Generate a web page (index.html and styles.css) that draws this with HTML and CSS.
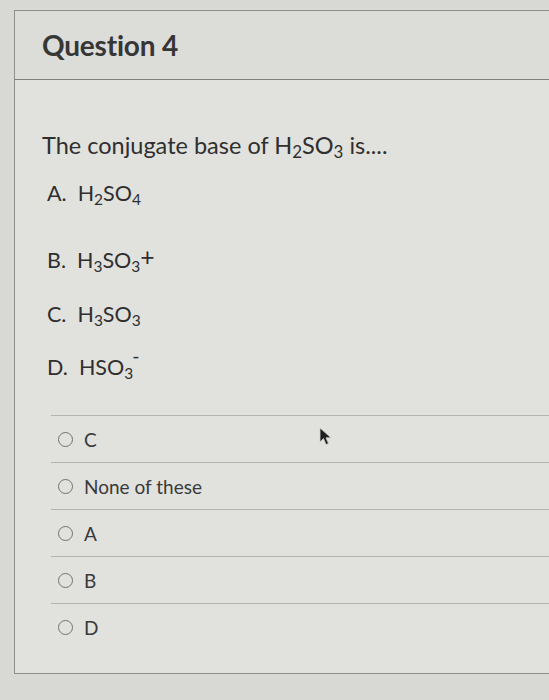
FILE: index.html
```html
<!DOCTYPE html>
<html>
<head>
<meta charset="utf-8">
<link rel="stylesheet" href="styles.css">
</head>
<body>
<div class="page">
  <div class="card">
    <div class="header">
      <h2 class="title">Question 4</h2>
    </div>
    <div class="content">
      <p class="prompt">The conjugate base of H<sub>2</sub>SO<sub>3</sub> is....</p>
      <p class="opt opt-a">A.&nbsp; H<sub>2</sub>SO<sub>4</sub></p>
      <p class="opt opt-b">B.&nbsp; H<sub>3</sub>SO<sub>3</sub><span class="plus">+</span></p>
      <p class="opt opt-c">C.&nbsp; H<sub>3</sub>SO<sub>3</sub></p>
      <p class="opt opt-d">D.&nbsp; HSO<sub>3</sub><span class="minus">-</span></p>
      <div class="answers">
        <label class="answer"><span class="radio"></span><span class="atext">C</span></label>
        <label class="answer"><span class="radio"></span><span class="atext">None of these</span></label>
        <label class="answer"><span class="radio"></span><span class="atext">A</span></label>
        <label class="answer"><span class="radio"></span><span class="atext">B</span></label>
        <label class="answer"><span class="radio"></span><span class="atext">D</span></label>
      </div>
    </div>
  </div>
  <svg class="cursor" width="14" height="20" viewBox="0 0 14 20"><path d="M1 1 L1 15 L4.5 11.5 L7 17.5 L9.5 16.5 L7 10.8 L12 10.8 Z" fill="#1e1e1e" stroke="#cfcfcf" stroke-width="0.8"/></svg>
</div>
</body>
</html>
```
FILE: styles.css
```css
html, body {
  margin: 0;
  padding: 0;
  background: #d8d8d5;
  overflow: hidden;
}
.page {
  position: relative;
  width: 549px;
  height: 700px;
  overflow: hidden;
  font-family: Lato, "Open Sans", sans-serif;
  color: #2f2f2f;
}
.card {
  margin: 10px 0 0 14px;
  width: 560px;
  height: 664px;
  border: 1px solid #8e8e8c;
  border-right: none;
  background: #e1e1de;
  box-sizing: border-box;
}
.header {
  height: 68px;
  border-bottom: 1px solid #7e7e7c;
  background: #dcdcd9;
  display: flex;
  align-items: center;
  padding-left: 27px;
}
.title {
  margin: 0;
  font-size: 28px;
  font-weight: 700;
  color: #363636;
  letter-spacing: -0.2px;
}
.content {
  padding: 50px 0 0 27px;
}
.prompt {
  margin: 0;
  font-size: 23.5px;
  line-height: 30px;
}
sub {
  font-size: 0.72em;
  vertical-align: -0.25em;
  line-height: 0;
}
.opt {
  margin: 0;
  font-size: 21.5px;
  line-height: 26px;
  padding-left: 5px;
}
.opt-a { margin-top: 20px; }
.opt-b { margin-top: 41px; }
.opt-c { margin-top: 28px; }
.opt-d { margin-top: 27px; }
.plus {
  font-size: 1.15em;
  vertical-align: 0.08em;
  line-height: 0;
}
.minus {
  display: inline-block;
  font-size: 0.9em;
  vertical-align: 0.6em;
  line-height: 0;
  margin-left: -1px;
}
.answers {
  margin-top: 35px;
  margin-left: 9px;
}
.answer {
  display: flex;
  align-items: center;
  height: 47px;
  border-top: 1px solid #b4b4b1;
  box-sizing: border-box;
  padding-left: 7px;
}
.radio {
  width: 13px;
  height: 13px;
  border: 1.8px solid #727270;
  border-radius: 50%;
  margin-right: 11px;
  flex: none;
}
.atext {
  font-size: 19px;
  color: #3a3a3a;
}
.cursor {
  position: absolute;
  left: 319px;
  top: 427px;
}
```
